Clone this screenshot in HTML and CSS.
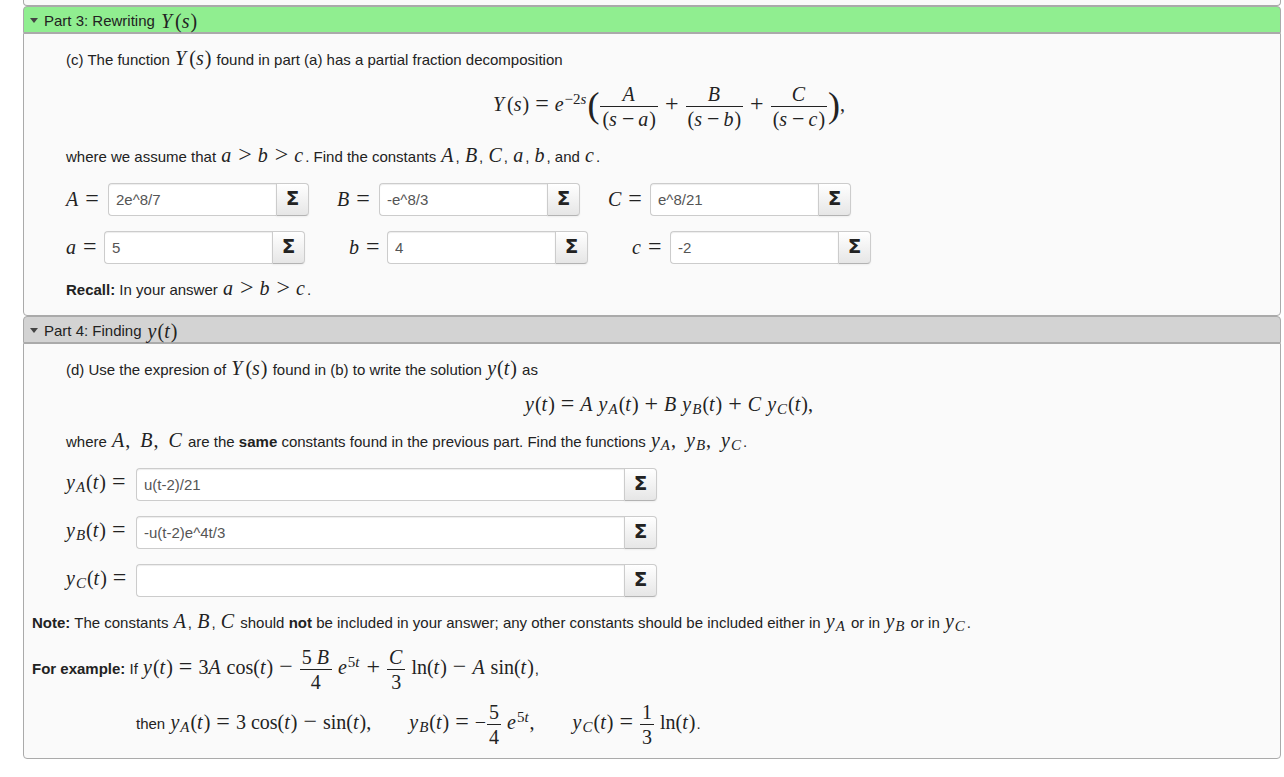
FILE: index.html
```
<!DOCTYPE html>
<html lang="en">
<head>
    <meta charset="UTF-8">
    <meta name="viewport" content="width=device-width, initial-scale=1.0">
    <title>Differential equation: parts 3 and 4</title>
    <link rel="stylesheet" href="styles.css">
</head>
<body>
    <div class="previous"></div>

    <details class="section" open>
        <summary class="done">Part 3: Rewriting <span class="math"><i class="Y">Y</i>(<i>s</i>)</span></summary>
        <div class="content">
            <p>(c) The function <span class="math"><i class="Y">Y</i>(<i>s</i>)</span> found in part (a) has a partial fraction decomposition</p>

            <p class="display tall"><span class="math"><i class="Y">Y</i>(<i>s</i>)<b>=</b><i>e</i><sup>−2<i>s</i></sup><span class="paren">(</span><span class="frac"><span><i>A</i></span><span>(<i>s</i><b>−</b><i>a</i>)</span></span><b>+</b><span class="frac"><span><i>B</i></span><span>(<i>s</i><b>−</b><i>b</i>)</span></span><b>+</b><span class="frac"><span><i>C</i></span><span>(<i>s</i><b>−</b><i>c</i>)</span></span><span class="paren">)</span>,</span></p>

            <p>where we assume that <span class="math"><i>a</i><b>&gt;</b><i>b</i><b>&gt;</b><i>c</i></span>. Find the constants <span class="math"><i>A</i></span>, <span class="math"><i>B</i></span>, <span class="math"><i>C</i></span>, <span class="math"><i>a</i></span>, <span class="math"><i>b</i></span>, and <span class="math"><i>c</i></span>.</p>

            <div class="rows">
                <div class="row upper">
                    <div class="answer">
                        <label class="math" for="A"><i>A</i><b>=</b></label>
                        <input id="A" type="text" value="2e^8/7"><button type="button">Σ</button>
                    </div>
                    <div class="answer">
                        <label class="math" for="B"><i>B</i><b>=</b></label>
                        <input id="B" type="text" value="-e^8/3"><button type="button">Σ</button>
                    </div>
                    <div class="answer">
                        <label class="math" for="C"><i>C</i><b>=</b></label>
                        <input id="C" type="text" value="e^8/21"><button type="button">Σ</button>
                    </div>
                </div>

                <div class="row lower">
                    <div class="answer">
                        <label class="math" for="a"><i>a</i><b>=</b></label>
                        <input id="a" type="text" value="5"><button type="button">Σ</button>
                    </div>
                    <div class="answer">
                        <label class="math" for="b"><i>b</i><b>=</b></label>
                        <input id="b" type="text" value="4"><button type="button">Σ</button>
                    </div>
                    <div class="answer">
                        <label class="math" for="c"><i>c</i><b>=</b></label>
                        <input id="c" type="text" value="-2"><button type="button">Σ</button>
                    </div>
                </div>
            </div>

            <p><strong>Recall:</strong> In your answer <span class="math"><i>a</i><b>&gt;</b><i>b</i><b>&gt;</b><i>c</i></span>.</p>
        </div>
    </details>

    <details class="section" open>
        <summary>Part 4: Finding <span class="math"><i>y</i>(<i>t</i>)</span></summary>
        <div class="content">
            <p>(d) Use the expresion of <span class="math"><i class="Y">Y</i>(<i>s</i>)</span> found in (b) to write the solution <span class="math"><i>y</i>(<i>t</i>)</span> as</p>

            <p class="display"><span class="math"><i>y</i>(<i>t</i>)<b>=</b><i>A</i>&nbsp;<i>y</i><sub><i>A</i></sub>(<i>t</i>)<b>+</b><i>B</i>&nbsp;<i>y</i><sub><i>B</i></sub>(<i>t</i>)<b>+</b><i>C</i>&nbsp;<i>y</i><sub><i>C</i></sub>(<i>t</i>),</span></p>

            <p>where <span class="math"><i>A</i>,&nbsp; <i>B</i>,&nbsp; <i>C</i></span> are the <strong>same</strong> constants found in the previous part. Find the functions <span class="math"><i>y</i><sub><i>A</i></sub>,&nbsp; <i>y</i><sub><i>B</i></sub>,&nbsp; <i>y</i><sub><i>C</i></sub></span>.</p>

            <div class="rows">
                <div class="answer long">
                    <label class="math" for="yA"><i>y</i><sub><i>A</i></sub>(<i>t</i>)<b>=</b></label>
                    <input id="yA" type="text" value="u(t-2)/21"><button type="button">Σ</button>
                </div>
                <div class="answer long">
                    <label class="math" for="yB"><i>y</i><sub><i>B</i></sub>(<i>t</i>)<b>=</b></label>
                    <input id="yB" type="text" value="-u(t-2)e^4t/3"><button type="button">Σ</button>
                </div>
                <div class="answer long">
                    <label class="math" for="yC"><i>y</i><sub><i>C</i></sub>(<i>t</i>)<b>=</b></label>
                    <input id="yC" type="text" value=""><button type="button">Σ</button>
                </div>
            </div>

            <p class="note"><strong>Note:</strong> The constants <span class="math"><i>A</i></span>, <span class="math"><i>B</i></span>, <span class="math"><i>C</i></span> should <strong>not</strong> be included in your answer; any other constants should be included either in <span class="math"><i>y</i><sub><i>A</i></sub></span> or in <span class="math"><i>y</i><sub><i>B</i></sub></span> or in <span class="math"><i>y</i><sub><i>C</i></sub></span>.</p>

            <p class="note tall"><strong>For example:</strong> If <span class="math"><i>y</i>(<i>t</i>)<b>=</b>3<i>A</i> cos(<i>t</i>)<b>−</b><span class="frac"><span>5 <i>B</i></span><span>4</span></span> <i>e</i><sup>5<i>t</i></sup><b>+</b><span class="frac"><span><i>C</i></span><span>3</span></span> ln(<i>t</i>)<b>−</b><i>A</i> sin(<i>t</i>)</span>,</p>

            <p class="then tall"><span>then <span class="math"><i>y</i><sub><i>A</i></sub>(<i>t</i>)<b>=</b>3 cos(<i>t</i>)<b>−</b>sin(<i>t</i>),</span></span>
                <span><span class="math"><i>y</i><sub><i>B</i></sub>(<i>t</i>)<b>=</b>−<span class="frac"><span>5</span><span>4</span></span> <i>e</i><sup>5<i>t</i></sup>,</span></span>
                <span><span class="math"><i>y</i><sub><i>C</i></sub>(<i>t</i>)<b>=</b><span class="frac"><span>1</span><span>3</span></span> ln(<i>t</i>)</span>.</span></p>
        </div>
    </details>
</body>
</html>
```

FILE: styles.css
```
* {
    box-sizing: border-box;
}
body {
    margin: 0 3px 17px 23px;
    background: #fff;
    color: #222;
    font: 15px/20px "Liberation Sans", Arial, sans-serif;
}
p {
    margin: 0;
}

/* Collapsible parts */
.previous {
    height: 6px;
    border: 1px solid #aaa;
    border-top: 0;
    border-radius: 0 0 4px 4px;
    background: #fafafa;
}
summary {
    display: flex;
    align-items: center;
    gap: 6px;
    height: 27px;
    padding: 2px 6px 0;
    border: 1px solid #aaa;
    border-radius: 4px 4px 0 0;
    background: #d3d3d3;
    cursor: pointer;
    list-style: none;
}
summary::before {
    content: "";
    border: 4px solid transparent;
    border-top: 5px solid #444;
    border-bottom: 0;
}
summary.done {
    background: #90ee90;
}
.content {
    display: flex;
    flex-direction: column;
    gap: 16px;
    padding: 16px 8px 15px 42px;
    border: 1px solid #aaa;
    border-radius: 0 0 4px 4px;
    background: #fafafa;
}

/* Formulas */
.math {
    font-family: "Liberation Serif", "Times New Roman", serif;
    font-size: 20px;
    line-height: 0;
    white-space: nowrap;
}
p .math {
    margin: 0 1px;
}
.math i {
    margin-right: 1px;
}
.math b {
    margin: 0 6px;
    font-size: 24px;
    font-weight: normal;
}
.math .Y {
    margin-right: 3px;
}
.math sub,
.math sup {
    font-size: 15px;
    line-height: 0;
}
.math sub {
    vertical-align: -3px;
}
.math sup {
    vertical-align: 7px;
}
.frac {
    display: inline-block;
    margin: -8px 1px;
    vertical-align: middle;
    text-align: center;
    line-height: 24px;
}
.frac > span {
    display: block;
    height: 24px;
    padding: 0 2px;
}
.frac > span + span {
    border-top: 1px solid #222;
}
.frac b {
    margin: 0 4px;
    font-size: 22px;
    line-height: 0;
}
.paren {
    font-size: 36px;
    line-height: 0;
    vertical-align: -6px;
}
.display {
    text-align: center;
}
.tall {
    height: 39px;
    line-height: 39px;
}
.display.tall {
    height: 45px;
    line-height: 40px;
}
.note {
    margin-left: -34px;
}
.then {
    display: flex;
    gap: 36px;
    margin-left: 70px;
}

/* Answer boxes */
.rows {
    display: flex;
    flex-direction: column;
    gap: 15px;
}
.row {
    display: flex;
}
.upper {
    gap: 28px;
}
.lower {
    gap: 44px;
}
.answer {
    display: flex;
    align-items: center;
}
.answer label {
    padding-bottom: 2px;
}
.upper label {
    width: 42px;
}
.lower label {
    width: 38px;
}
.long label {
    width: 70px;
}
.answer input {
    width: 168px;
    height: 33px;
    padding: 0 7px;
    border: 1px solid #ccc;
    border-right: 0;
    border-radius: 4px 0 0 4px;
    background: #fff;
    box-shadow: inset 0 1px 1px rgba(0, 0, 0, 0.075);
    color: #555;
    font: 15px "Liberation Sans", Arial, sans-serif;
}
.long input {
    width: 488px;
}
.answer button {
    width: 33px;
    height: 33px;
    padding: 0 0 3px;
    border: 1px solid #ccc;
    border-bottom-color: #b3b3b3;
    border-radius: 0 4px 4px 0;
    background: linear-gradient(#fff, #e6e6e6);
    box-shadow: 0 1px 2px rgba(0, 0, 0, 0.05);
    color: #222;
    font: bold 20px "DejaVu Sans", sans-serif;
}
```
